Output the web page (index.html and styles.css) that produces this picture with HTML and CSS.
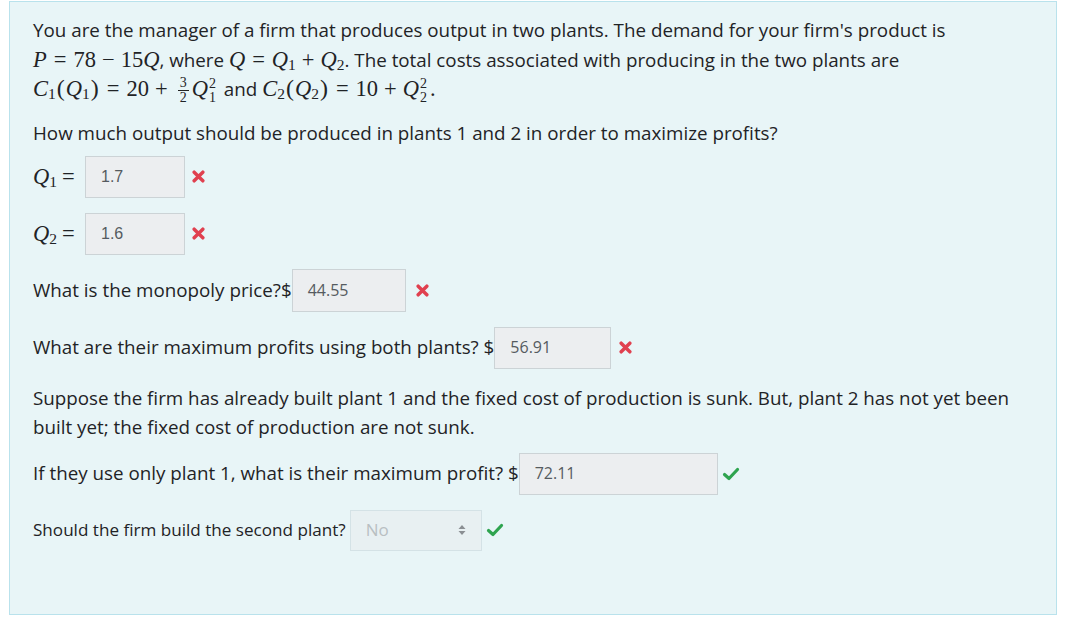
FILE: index.html
```html
<!DOCTYPE html>
<html>
<head>
<meta charset="utf-8">
<link rel="stylesheet" href="styles.css">
</head>
<body>
<div class="card">
  <p class="intro">You are the manager of a firm that produces output in two plants. The demand for your firm's product is <span class="m"><i>P</i><span class="rel">=</span>78<span class="bin">−</span>15<i>Q</i></span>, where <span class="m"><i>Q</i><span class="rel">=</span><i>Q</i><sub>1</sub><span class="bin">+</span><i>Q</i><sub>2</sub></span>. The total costs associated with producing in the two plants are <span class="m"><i>C</i><sub>1</sub><span class="par">(</span><i>Q</i><sub>1</sub><span class="par">)</span><span class="rel">=</span>20<span class="bin">+</span><span class="frac"><span class="num">3</span><span class="den">2</span></span><i>Q</i><span class="ss"><span>2</span><span>1</span></span></span> and <span class="m"><i>C</i><sub>2</sub><span class="par">(</span><i>Q</i><sub>2</sub><span class="par">)</span><span class="rel">=</span>10<span class="bin">+</span><i>Q</i><span class="ss"><span>2</span><span>2</span></span>.</span></p>

  <p class="q">How much output should be produced in plants 1 and 2 in order to maximize profits?</p>

  <div class="row r-q1">
    <span class="m lbl"><i>Q</i><sub>1</sub><span class="rel">=</span></span>
    <span class="field f-q">1.7</span>
    <svg class="ico x" viewBox="0 0 12 12"><path d="M2 2 L10 10 M10 2 L2 10" stroke="#e0404f" stroke-width="3.2" stroke-linecap="round"/></svg>
  </div>
  <div class="row r-q2">
    <span class="m lbl"><i>Q</i><sub>2</sub><span class="rel">=</span></span>
    <span class="field f-q">1.6</span>
    <svg class="ico x" viewBox="0 0 12 12"><path d="M2 2 L10 10 M10 2 L2 10" stroke="#e0404f" stroke-width="3.2" stroke-linecap="round"/></svg>
  </div>
  <div class="row r-price">
    <span class="txt">What is the monopoly price?$</span>
    <span class="field f-price">44.55</span>
    <svg class="ico x" viewBox="0 0 12 12"><path d="M2 2 L10 10 M10 2 L2 10" stroke="#e0404f" stroke-width="3.2" stroke-linecap="round"/></svg>
  </div>
  <div class="row r-profit">
    <span class="txt">What are their maximum profits using both plants? $</span>
    <span class="field f-profit">56.91</span>
    <svg class="ico x" viewBox="0 0 12 12"><path d="M2 2 L10 10 M10 2 L2 10" stroke="#e0404f" stroke-width="3.2" stroke-linecap="round"/></svg>
  </div>

  <p class="suppose">Suppose the firm has already built plant 1 and the fixed cost of production is sunk. But, plant 2 has not yet been<br>built yet; the fixed cost of production are not sunk.</p>

  <div class="row r-only">
    <span class="txt">If they use only plant 1, what is their maximum profit? $</span>
    <span class="field f-only">72.11</span>
    <svg class="ico ok" viewBox="0 0 18 14"><path d="M2.5 7.5 L7 11.5 L15.5 2.5" fill="none" stroke="#2ea44f" stroke-width="3.2" stroke-linecap="round" stroke-linejoin="round"/></svg>
  </div>
  <div class="row r-build">
    <span class="txt small">Should the firm build the second plant?</span>
    <span class="select"><span>No</span><svg class="arrows" viewBox="0 0 8 12"><path d="M4 1 L7.5 5 H0.5 Z M4 11 L7.5 7 H0.5 Z" fill="#8a8f93"/></svg></span>
    <svg class="ico ok wide" viewBox="0 0 18 14"><path d="M2.5 7.5 L7 11.5 L15.5 2.5" fill="none" stroke="#2ea44f" stroke-width="3.2" stroke-linecap="round" stroke-linejoin="round"/></svg>
  </div>
</div>
</body>
</html>
```
FILE: styles.css
```css
html, body {
  margin: 0;
  padding: 0;
  background: #ffffff;
}
body {
  padding: 1px 11px 0 9px;
  font-family: "Open Sans", "Noto Sans", sans-serif;
  color: #1f2326;
}
.card {
  box-sizing: border-box;
  width: 1048px;
  height: 614px;
  background: #e8f5f7;
  border: 1px solid #b9e2ec;
  padding: 14px 22px 0 23px;
  font-size: 18.8px;
  line-height: 29.5px;
}
p { margin: 0; }
.intro { margin-bottom: 14px; }
.m {
  font-family: "Liberation Serif", "DejaVu Serif", serif;
  font-size: 22.5px;
  line-height: 20px;
  white-space: nowrap;
}
.m i { font-style: italic; }
.rel { margin: 0 7px; }
.bin { margin: 0 6px; }
.par { font-size: 24px; margin: 0 1px; }
.m sub {
  font-size: 15.5px;
  vertical-align: -3px;
  line-height: 0;
}
.frac {
  display: inline-flex;
  flex-direction: column;
  vertical-align: 9px;
  font-size: 14px;
  line-height: 14px;
  text-align: center;
  margin: 0 3px 0 4px;
}
.frac .num { border-bottom: 1px solid #222; padding: 0 2px; }
.ss {
  display: inline-flex;
  flex-direction: column;
  vertical-align: 8px;
  font-size: 14px;
  line-height: 14px;
  margin: 0 3px 0 1px;
}
.q { margin-bottom: 7px; }
.row {
  display: flex;
  align-items: center;
  height: 42px;
}
.r-q1, .r-q2, .r-price { margin-bottom: 15px; }
.r-profit { margin-bottom: 15px; }
.lbl { width: 52px; flex: none; }
.lbl .rel { margin-right: 0; margin-left: 5px; }
.field {
  box-sizing: border-box;
  height: 42px;
  background: #eceef0;
  border: 1px solid #ccd3d6;
  display: flex;
  align-items: center;
  padding-left: 15px;
  font-size: 16px;
  color: #555b60;
  flex: none;
}
.f-q {
  width: 100px;
  font-family: "Liberation Sans", Arial, sans-serif;
  font-size: 16px;
}
.f-price { width: 114px; height: 43px; }
.f-profit { width: 117px; }
.f-only { width: 199px; }
.txt { flex: none; }
.ico { flex: none; }
.ico.x { width: 13px; height: 13px; margin-left: 7px; }
.r-price .ico.x { margin-left: 10px; }
.r-profit .ico.x { margin-left: 8px; }
.ico.ok { width: 18px; height: 14px; margin-left: 4px; }
.ico.ok.wide { margin-left: 4px; }
.suppose { margin-bottom: 10px; }
.r-only { margin-bottom: 15px; }
.r-build { height: 41px; }
.small { font-size: 17.1px; }
.select {
  box-sizing: border-box;
  width: 132px;
  height: 41px;
  margin-left: 4px;
  background: #e8f0f2;
  border: 1px solid #d4e2e6;
  display: flex;
  align-items: center;
  justify-content: space-between;
  padding: 0 15px 0 15px;
  color: #b9bfc2;
  font-size: 17px;
  flex: none;
}
.arrows {
  width: 8px;
  height: 12px;
}
```
